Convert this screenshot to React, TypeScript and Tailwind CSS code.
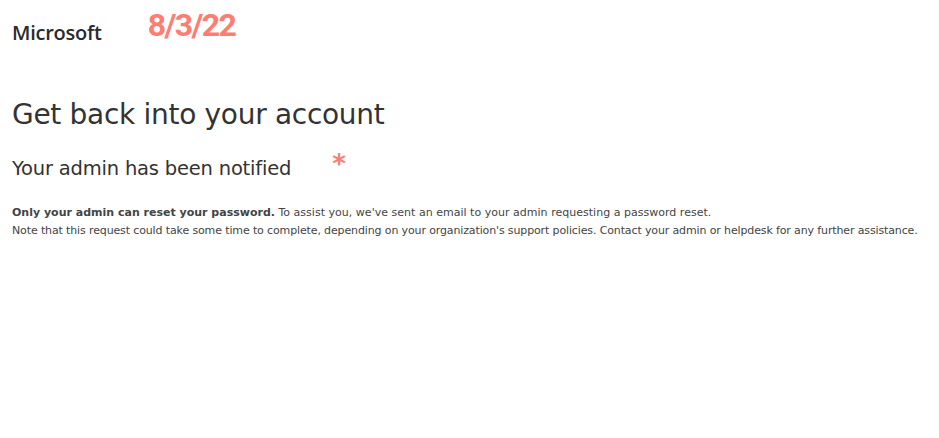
export default function App() {
  return (
    <div className="min-h-screen w-full bg-white text-[#333] font-['DejaVu_Sans',sans-serif]">
      {/* header */}
      <div className="flex items-start pl-3 pt-[9px]">
        <div className="mt-[12px] font-['Open_Sans',sans-serif] font-semibold text-[20px] leading-[24px] tracking-[-0.25px] text-[#2b2b2b]">
          Microsoft
        </div>
        <div className="ml-[46px] font-['Roboto',sans-serif] font-bold text-[32px] leading-[32px] text-[#ff7d70] tracking-[-1.6px]">
          8/3/22
        </div>
      </div>

      <h1 className="mt-[52px] pl-3 text-[28px] leading-[36px] tracking-[-0.3px] text-[#333]">
        Get back into your account
      </h1>

      <div className="mt-[22px] flex items-start pl-3">
        <h2 className="text-[19.5px] leading-[28px] tracking-[-0.2px] text-[#333]">Your admin has been notified</h2>
        <span className="ml-[41px] -mt-[5px] text-[26px] leading-[28px] font-bold text-[#ff7d70]">*</span>
      </div>

      <div className="mt-[21px] pl-3 text-[11px] leading-[18px] text-[#444]">
        <p>
          <span className="font-bold">Only your admin can reset your password.</span>{" "}
          <span className="tracking-[0.02px]">To assist you, we've sent an email to your admin requesting a password reset.</span>
        </p>
        <p className="tracking-[-0.13px]">
          Note that this request could take some time to complete, depending on your organization's support policies.
          Contact your admin or helpdesk for any further assistance.
        </p>
      </div>
    </div>
  );
}
